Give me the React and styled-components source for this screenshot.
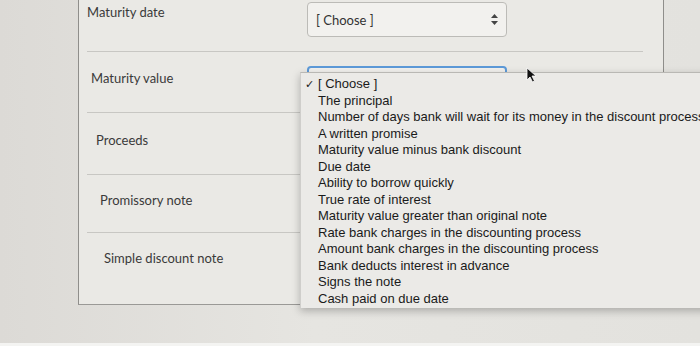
import React from 'react';
import styled, { createGlobalStyle } from 'styled-components';

const GlobalStyle = createGlobalStyle`
  html, body {
    margin: 0;
    padding: 0;
    background: #dedcd8;
  }
`;

// page photo area
const Page = styled.div`
  position: relative;
  width: 700px;
  height: 346px;
  overflow: hidden;
  background: linear-gradient(90deg, #dcdad6 0%, #e6e5e1 45%, #e3e2de 100%);
  font-family: Lato, "Open Sans", sans-serif;
`;

const Panel = styled.div`
  margin-left: 78px;
  width: 584px;
  height: 304px;
  border-left: 1px solid #8f8e8b;
  border-right: 1px solid #8f8e8b;
  border-bottom: 1px solid #9a9996;
  background: #eae9e5;
`;

const Row = styled.div`
  display: flex;
  align-items: flex-start;
  height: ${(p) => p.$h}px;
  margin: 0 20px 0 8px;
  border-bottom: ${(p) => (p.$last ? 'none' : '1px solid #c8c7c3')};
  box-sizing: border-box;
`;

const Label = styled.div`
  width: 220px;
  padding-top: ${(p) => p.$top}px;
  padding-left: ${(p) => p.$indent}px;
  box-sizing: border-box;
  font-size: 13px;
  color: #3a3a3a;
`;

const Field = styled.div`
  padding-top: ${(p) => p.$top}px;
`;

const Select = styled.div`
  display: flex;
  align-items: center;
  justify-content: space-between;
  width: 200px;
  height: 35px;
  box-sizing: border-box;
  padding: 0 8px 0 8px;
  border: ${(p) => (p.$focus ? '2px solid #5d9ad8' : '1px solid #bcbbb7')};
  border-radius: 4px;
  background: #f2f1ee;
  font-size: 13px;
  color: #333;
`;

const Arrows = styled.svg`
  width: 7px;
  height: 11px;
`;

const Dropdown = styled.ul`
  position: absolute;
  left: 300px;
  top: 72px;
  width: 420px;
  height: 236px;
  margin: 0;
  padding: 3px 0 0 0;
  box-sizing: border-box;
  list-style: none;
  background: #ebeae7;
  border-top: 1px solid #b9b8b4;
  border-left: 1px solid #cfcecb;
  box-shadow: 0 3px 8px rgba(0, 0, 0, 0.25);
  font-family: "Liberation Sans", Arial, sans-serif;
  font-size: 13px;
  color: #1a1a1a;
`;

const Item = styled.li`
  position: relative;
  height: 16.5px;
  line-height: 16.5px;
  padding-left: 17px;
  white-space: nowrap;
`;

const Check = styled.span`
  position: absolute;
  left: 4px;
  top: 0;
  font-size: 11px;
`;

const Cursor = styled.svg`
  position: absolute;
  left: 526px;
  top: 67px;
  width: 11px;
  height: 16px;
`;

const Bezel = styled.div`
  position: absolute;
  left: 0;
  right: 0;
  bottom: 0;
  height: 3px;
  background: #f4f4f2;
`;

const rows = [
  { label: 'Maturity date', h: 52, top: 4, fieldTop: 2, indent: 0, text: '[ Choose ]' },
  { label: 'Maturity value', h: 61, top: 18, fieldTop: 14, indent: 4, focus: true },
  { label: 'Proceeds', h: 62, top: 19, fieldTop: 14, indent: 9 },
  { label: 'Promissory note', h: 58, top: 17, fieldTop: 14, indent: 13 },
  { label: 'Simple discount note', h: 71, top: 17, fieldTop: 14, indent: 17, last: true },
];

const options = [
  '[ Choose ]',
  'The principal',
  'Number of days bank will wait for its money in the discount process',
  'A written promise',
  'Maturity value minus bank discount',
  'Due date',
  'Ability to borrow quickly',
  'True rate of interest',
  'Maturity value greater than original note',
  'Rate bank charges in the discounting process',
  'Amount bank charges in the discounting process',
  'Bank deducts interest in advance',
  'Signs the note',
  'Cash paid on due date',
];

function App() {
  return (
    <>
      <GlobalStyle />
      <Page>
        <Panel>
          {rows.map((r) => (
            <Row key={r.label} $h={r.h} $last={r.last}>
              <Label $top={r.top} $indent={r.indent}>{r.label}</Label>
              <Field $top={r.fieldTop}>
                <Select $focus={r.focus}>
                  <span>{r.text}</span>
                  <Arrows viewBox="0 0 7 11">
                    <path d="M3.5 0 L7 4 L0 4 Z M3.5 11 L7 7 L0 7 Z" fill="#444" />
                  </Arrows>
                </Select>
              </Field>
            </Row>
          ))}
        </Panel>
        <Dropdown>
          {options.map((o, i) => (
            <Item key={o}>
              {i === 0 && <Check>✓</Check>}
              {o}
            </Item>
          ))}
        </Dropdown>
        <Cursor viewBox="0 0 11 16">
          <path d="M1 1 L1 13 L4 10 L6.5 15 L8.5 14 L6 9 L10 9 Z" fill="#111" stroke="#fff" strokeWidth="0.8" />
        </Cursor>
        <Bezel />
      </Page>
    </>
  );
}

export default App;
